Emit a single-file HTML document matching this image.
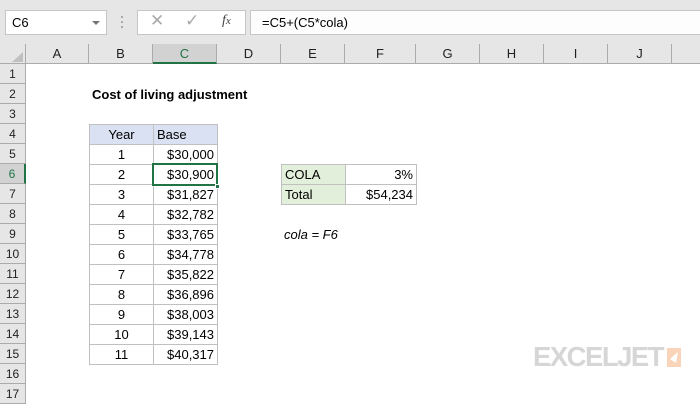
<!DOCTYPE html>
<html><head><style>
*{margin:0;padding:0;box-sizing:border-box}
body{width:700px;height:400px;overflow:hidden;background:#fff;font-family:"Liberation Sans",Calibri,sans-serif;font-size:13px;color:#000;position:relative}
.a{position:absolute}
.ch{position:absolute;top:44px;height:20px;background:#e6e6e6;border-right:1px solid #ababab;border-bottom:1px solid #ababab;text-align:center;line-height:20px;font-size:13px;color:#222}
.rh{position:absolute;left:0;width:26px;height:20px;background:#e6e6e6;border-bottom:1px solid #ababab;border-right:1px solid #ababab;text-align:center;line-height:20px;font-size:12px;color:#222}
.c{position:absolute;height:21px;line-height:19px;padding:0 3px;border:1px solid #c0c0c0;font-size:13px;white-space:nowrap}
</style></head><body>
<div class="a" style="left:0;top:0;width:700px;height:44px;background:#e6e6e6"></div>
<div class="a" style="left:5px;top:10px;width:102px;height:25px;background:#fff;border:1px solid #c6c6c6;line-height:23px;padding-left:6px;font-size:13px">C6</div>
<div class="a" style="left:92px;top:21px;width:0;height:0;border-left:4px solid transparent;border-right:4px solid transparent;border-top:4px solid #777"></div>
<div class="a" style="left:121px;top:16px;width:2px;height:2px;background:#aaa;box-shadow:0 5px 0 #aaa,0 10px 0 #aaa"></div>
<div class="a" style="left:137px;top:10px;width:109px;height:25px;background:#fff;border:1px solid #c6c6c6"></div>
<div class="a" style="left:150px;top:11px;color:#aaa;font-size:17px">✕</div>
<div class="a" style="left:185px;top:11px;color:#aaa;font-size:17px">✓</div>
<div class="a" style="left:222px;top:13px;color:#444;font-family:'Liberation Serif',serif;font-style:italic;font-size:14px">f<span style="font-size:11px">x</span></div>
<div class="a" style="left:250px;top:10px;width:452px;height:25px;background:#fdfdfd;border:1px solid #c6c6c6;line-height:23px;padding-left:11px;font-size:13px">=C5+(C5*cola)</div>
<div class="ch" style="left:0;width:26px"></div>
<div class="a" style="left:12px;top:52px;width:0;height:0;border-left:11px solid transparent;border-bottom:10px solid #c0c0c0"></div>
<div class="ch" style="left:26px;width:63px">A</div>
<div class="ch" style="left:89px;width:64px">B</div>
<div class="ch" style="left:153px;width:64px;background:#d2d2d2;border-bottom:2px solid #217346;color:#217346">C</div>
<div class="ch" style="left:217px;width:64px">D</div>
<div class="ch" style="left:281px;width:64px">E</div>
<div class="ch" style="left:345px;width:71px">F</div>
<div class="ch" style="left:416px;width:64px">G</div>
<div class="ch" style="left:480px;width:64px">H</div>
<div class="ch" style="left:544px;width:64px">I</div>
<div class="ch" style="left:608px;width:64px">J</div>
<div class="ch" style="left:672px;width:40px"></div>
<div class="rh" style="top:64px">1</div><div class="rh" style="top:84px">2</div><div class="rh" style="top:104px">3</div><div class="rh" style="top:124px">4</div><div class="rh" style="top:144px">5</div>
<div class="rh" style="top:164px;background:#d2d2d2;color:#217346;border-right:2px solid #217346">6</div>
<div class="rh" style="top:184px">7</div><div class="rh" style="top:204px">8</div><div class="rh" style="top:224px">9</div><div class="rh" style="top:244px">10</div><div class="rh" style="top:264px">11</div><div class="rh" style="top:284px">12</div><div class="rh" style="top:304px">13</div><div class="rh" style="top:324px">14</div><div class="rh" style="top:344px">15</div><div class="rh" style="top:364px">16</div><div class="rh" style="top:384px">17</div>
<div class="a" style="left:92px;top:87px;font-weight:bold;font-size:13px">Cost of living adjustment</div>
<div class="c" style="left:89px;top:124px;width:65px;background:#d9e1f2;text-align:center">Year</div>
<div class="c" style="left:153px;top:124px;width:65px;background:#d9e1f2">Base</div>
<div class="c" style="left:89px;top:144px;width:65px;text-align:center">1</div><div class="c" style="left:153px;top:144px;width:65px;text-align:right">$30,000</div>
<div class="c" style="left:89px;top:164px;width:65px;text-align:center">2</div><div class="c" style="left:153px;top:164px;width:65px;text-align:right">$30,900</div>
<div class="c" style="left:89px;top:184px;width:65px;text-align:center">3</div><div class="c" style="left:153px;top:184px;width:65px;text-align:right">$31,827</div>
<div class="c" style="left:89px;top:204px;width:65px;text-align:center">4</div><div class="c" style="left:153px;top:204px;width:65px;text-align:right">$32,782</div>
<div class="c" style="left:89px;top:224px;width:65px;text-align:center">5</div><div class="c" style="left:153px;top:224px;width:65px;text-align:right">$33,765</div>
<div class="c" style="left:89px;top:244px;width:65px;text-align:center">6</div><div class="c" style="left:153px;top:244px;width:65px;text-align:right">$34,778</div>
<div class="c" style="left:89px;top:264px;width:65px;text-align:center">7</div><div class="c" style="left:153px;top:264px;width:65px;text-align:right">$35,822</div>
<div class="c" style="left:89px;top:284px;width:65px;text-align:center">8</div><div class="c" style="left:153px;top:284px;width:65px;text-align:right">$36,896</div>
<div class="c" style="left:89px;top:304px;width:65px;text-align:center">9</div><div class="c" style="left:153px;top:304px;width:65px;text-align:right">$38,003</div>
<div class="c" style="left:89px;top:324px;width:65px;text-align:center">10</div><div class="c" style="left:153px;top:324px;width:65px;text-align:right">$39,143</div>
<div class="c" style="left:89px;top:344px;width:65px;text-align:center">11</div><div class="c" style="left:153px;top:344px;width:65px;text-align:right">$40,317</div>
<div class="a" style="left:152px;top:163px;width:66px;height:23px;border:2px solid #217346"></div>
<div class="a" style="left:215px;top:184px;width:5px;height:5px;background:#217346;border:1px solid #fff"></div>
<div class="c" style="left:281px;top:164px;width:65px;background:#e2efda">COLA</div>
<div class="c" style="left:345px;top:164px;width:72px;text-align:right">3%</div>
<div class="c" style="left:281px;top:184px;width:65px;background:#e2efda">Total</div>
<div class="c" style="left:345px;top:184px;width:72px;text-align:right">$54,234</div>
<div class="a" style="left:284px;top:227px;font-style:italic">cola = F6</div>
<div class="a" style="left:533px;top:341px;font-size:28px;font-weight:bold;color:#d6d6d6;letter-spacing:-1.5px;transform:scaleX(0.98);transform-origin:left;font-family:'Liberation Sans',sans-serif">EXCELJET</div>
<div class="a" style="left:667px;top:348px;width:14px;height:19px;background:#f9d4b8"></div>
<svg class="a" style="left:667px;top:348px" width="14" height="19"><path d="M11 4 L3 11 L9 15 Z" fill="#fff"/></svg>
</body></html>
